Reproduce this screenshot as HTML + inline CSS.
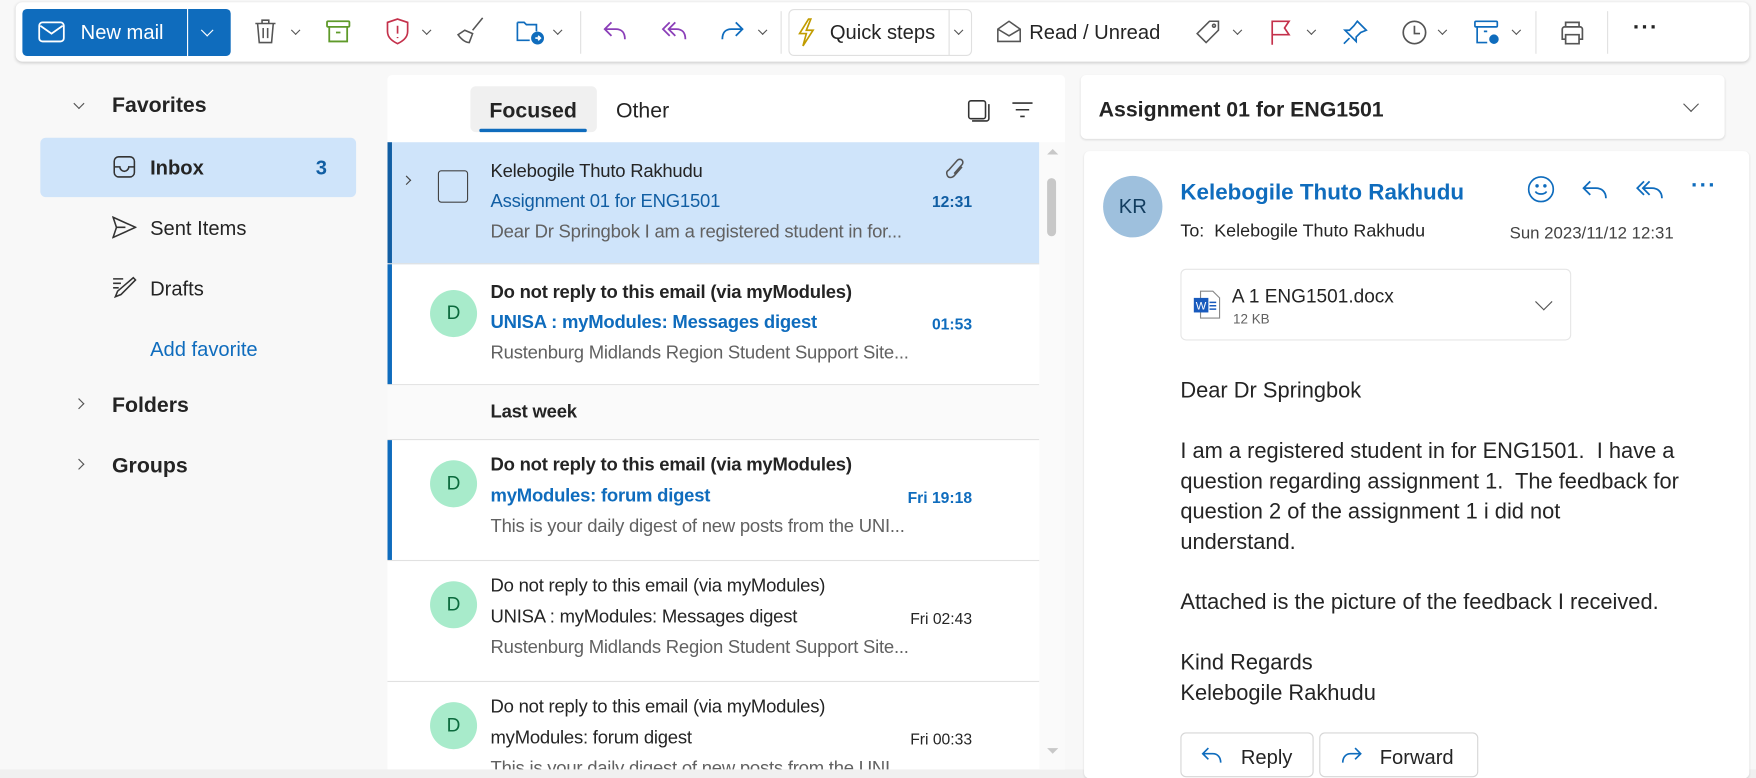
<!DOCTYPE html>
<html><head><meta charset="utf-8"><style>
*{box-sizing:border-box;margin:0;padding:0}
html,body{width:1756px;height:769px;overflow:hidden;background:#f0f0f0}
#w{position:absolute;left:0;top:0;width:1568px;height:687px;transform:scale(1.11990);transform-origin:0 0;font-family:"Liberation Sans",sans-serif;color:#242424;background:#f8f8f8}
.a{position:absolute}
.tb{left:14px;top:2px;width:1548px;height:53px;background:#fff;border-radius:6px;box-shadow:0 1px 3px rgba(0,0,0,.18)}
.chev{position:absolute;width:6px;height:6px;border-right:1.3px solid #555;border-bottom:1.3px solid #555;transform:rotate(45deg)}
.sep{position:absolute;top:10px;width:1px;height:38px;background:#e0e0e0}
.nav{font-size:18px}
.list{left:346px;top:67px;width:605px;height:620px;background:#fff;border-radius:4px 4px 0 0;overflow:hidden}
.row{position:absolute;left:0;width:582px;border-bottom:1px solid #e1e1e1}
.row .t{position:absolute;left:92px;font-size:16.5px;white-space:nowrap;letter-spacing:-.2px}
.av{position:absolute;left:38px;width:42px;height:42px;border-radius:50%;background:#a8ebcb;color:#0b6a3d;font-size:17px;text-align:center;line-height:42px}
.bar{position:absolute;left:0;top:0;width:4px;height:100%;background:#0f6cbd}
.time{position:absolute;right:60px;font-size:14px}
.blue{color:#0f6cbd}
.gray{color:#616161}
</style></head><body><div id="w">
<div class="a tb"></div>
<div class="a" style="left:20px;top:8px;width:186px;height:42px;background:#0f6cbd;border-radius:4px"></div>
<div class="a" style="left:167px;top:8px;width:1px;height:42px;background:#fff"></div>
<svg class="a" style="left:34px;top:19px" width="24" height="20" viewBox="0 0 24 20"><rect x="1" y="1" width="22" height="17" rx="3" fill="none" stroke="#fff" stroke-width="1.6"/><path d="M2 4l10 7 10-7" fill="none" stroke="#fff" stroke-width="1.6"/></svg>
<div class="a" style="left:72px;top:19px;color:#fff;font-size:18px">New mail</div>
<div class="chev" style="left:181px;top:23px;border-color:#fff;width:8px;height:8px"></div>
<svg class="a" style="left:226px;top:16px" width="22" height="24" viewBox="0 0 22 24" fill="none" stroke="#555" stroke-width="1.4"><path d="M2 5h18M8 5V2h6v3M4 5l1.5 17h11L18 5M9 9v9M13 9v9"/></svg>
<div class="chev" style="left:261px;top:24px"></div>
<svg class="a" style="left:291px;top:17px" width="22" height="22" viewBox="0 0 22 22" fill="none" stroke="#5f9a2a" stroke-width="1.6"><rect x="1" y="2" width="20" height="5" rx="1"/><path d="M3 7v13h16V7M9 12h4"/></svg>
<svg class="a" style="left:344px;top:16px" width="22" height="24" viewBox="0 0 22 24" fill="none" stroke="#c4314b" stroke-width="1.5"><path d="M11 1l9 3v8c0 6-5 9-9 11-4-2-9-5-9-11V4z"/><path d="M11 7v7M11 17v1"/></svg>
<div class="chev" style="left:378px;top:24px"></div>
<svg class="a" style="left:407px;top:15px" width="26" height="26" viewBox="0 0 26 26" fill="none" stroke="#555" stroke-width="1.4"><path d="M24 1l-9 11M8 12l7 3-3 8c-4 0-8-4-10-7l6-4z"/></svg>
<svg class="a" style="left:460px;top:16px" width="26" height="24" viewBox="0 0 26 24" fill="none" stroke="#0f6cbd" stroke-width="1.5"><path d="M2 4h6l2 2h9v6M2 4v16h11"/><circle cx="20" cy="18" r="5" fill="#0f6cbd"/><path d="M18 18h4M20.5 16l2 2-2 2" stroke="#fff"/></svg>
<div class="chev" style="left:495px;top:24px"></div>
<div class="sep" style="left:518px"></div>
<svg class="a" style="left:538px;top:18px" width="22" height="20" viewBox="0 0 22 20" fill="none" stroke="#8b3fb8" stroke-width="1.6"><path d="M8 2L2 8l6 6M2 8h10c5 0 8 3 8 9"/></svg>
<svg class="a" style="left:590px;top:18px" width="26" height="20" viewBox="0 0 26 20" fill="none" stroke="#8b3fb8" stroke-width="1.6"><path d="M8 2L2 8l6 6M13 2L7 8l6 6M7 8h7c5 0 8 3 8 9"/></svg>
<svg class="a" style="left:643px;top:18px" width="22" height="20" viewBox="0 0 22 20" fill="none" stroke="#0f6cbd" stroke-width="1.6"><path d="M14 2l6 6-6 6M20 8H10c-5 0-8 3-8 9"/></svg>
<div class="chev" style="left:678px;top:24px"></div>
<div class="sep" style="left:697px"></div>
<div class="a" style="left:704px;top:8px;width:164px;height:42px;border:1px solid #e0e0e0;border-radius:5px"></div>
<div class="a" style="left:847px;top:8px;width:1px;height:42px;background:#e0e0e0"></div>
<svg class="a" style="left:712px;top:16px" width="16" height="26" viewBox="0 0 16 26" fill="none" stroke="#c19c00" stroke-width="1.5"><path d="M10 1L2 14h6l-3 11 9-14H8l4-10z"/></svg>
<div class="a" style="left:741px;top:19px;font-size:18px">Quick steps</div>
<div class="chev" style="left:853px;top:24px"></div>
<svg class="a" style="left:889px;top:17px" width="24" height="22" viewBox="0 0 24 22" fill="none" stroke="#555" stroke-width="1.4"><path d="M2 9l10-7 10 7v11H2zM2 9l10 6 10-6"/></svg>
<div class="a" style="left:919px;top:19px;font-size:18px">Read / Unread</div>
<svg class="a" style="left:1067px;top:17px" width="24" height="24" viewBox="0 0 24 24" fill="none" stroke="#555" stroke-width="1.4"><path d="M13 2h8v8L10 21 2 13z"/><circle cx="17" cy="6" r="1.3"/></svg>
<div class="chev" style="left:1102px;top:24px"></div>
<svg class="a" style="left:1134px;top:17px" width="20" height="24" viewBox="0 0 20 24" fill="none" stroke="#c4314b" stroke-width="1.5"><path d="M2 23V2h15l-4 6 4 6H2"/></svg>
<div class="chev" style="left:1168px;top:24px"></div>
<svg class="a" style="left:1198px;top:17px" width="24" height="24" viewBox="0 0 24 24" fill="none" stroke="#0f6cbd" stroke-width="1.5"><path d="M14 2l8 8-5 2-4 4 0 4-10-10 4 0 4-4zM7 17l-5 5"/></svg>
<svg class="a" style="left:1251px;top:17px" width="24" height="24" viewBox="0 0 24 24" fill="none" stroke="#555" stroke-width="1.5"><circle cx="12" cy="12" r="10"/><path d="M12 6v7h5"/></svg>
<div class="chev" style="left:1285px;top:24px"></div>
<svg class="a" style="left:1315px;top:17px" width="26" height="24" viewBox="0 0 26 24" fill="none" stroke="#0f6cbd" stroke-width="1.5"><rect x="2" y="2" width="20" height="5" rx="1"/><path d="M4 7v14h9M10 11h3"/><circle cx="19" cy="18" r="3.5" fill="#0f6cbd"/></svg>
<div class="chev" style="left:1351px;top:24px"></div>
<div class="sep" style="left:1371px"></div>
<svg class="a" style="left:1392px;top:18px" width="24" height="22" viewBox="0 0 24 22" fill="none" stroke="#555" stroke-width="1.5"><path d="M6 6V2h12v4M6 17H3V8c0-1 1-2 2-2h14c1 0 2 1 2 2v9h-3M6 13h12v8H6z"/></svg>
<div class="sep" style="left:1435px"></div>
<div class="a" style="left:1458px;top:14px;font-size:20px;font-weight:bold;letter-spacing:1px">···</div>

<div class="chev" style="left:67px;top:89px;width:7px;height:7px"></div>
<div class="a nav" style="left:100px;top:84px;font-weight:bold;font-size:19px">Favorites</div>
<div class="a" style="left:36px;top:123px;width:282px;height:53px;background:#cfe4fa;border-radius:5px"></div>
<svg class="a" style="left:101px;top:139px" width="20" height="20" viewBox="0 0 20 20" fill="none" stroke="#333" stroke-width="1.4"><rect x="1" y="1" width="18" height="18" rx="4"/><path d="M1 10h5c0 2 2 4 4 4s4-2 4-4h5"/></svg>
<div class="a nav" style="left:134px;top:140px;font-weight:bold">Inbox</div>
<div class="a nav" style="left:282px;top:140px;font-weight:bold;color:#115ea3">3</div>
<svg class="a" style="left:100px;top:193px" width="22" height="20" viewBox="0 0 22 20" fill="none" stroke="#333" stroke-width="1.4"><path d="M1 1l20 9-20 9 3-9zM4 10h8"/></svg>
<div class="a nav" style="left:134px;top:194px">Sent Items</div>
<svg class="a" style="left:100px;top:246px" width="22" height="22" viewBox="0 0 22 22" fill="none" stroke="#333" stroke-width="1.4"><path d="M1 3h9M1 7h7M1 11h5M19 2l2 2-13 13-5 2 2-5z"/></svg>
<div class="a nav" style="left:134px;top:248px">Drafts</div>
<div class="a nav blue" style="left:134px;top:302px">Add favorite</div>
<div class="chev" style="left:67px;top:357px;transform:rotate(-45deg);width:7px;height:7px"></div>
<div class="a nav" style="left:100px;top:352px;font-weight:bold;font-size:19px">Folders</div>
<div class="chev" style="left:67px;top:411px;transform:rotate(-45deg);width:7px;height:7px"></div>
<div class="a nav" style="left:100px;top:406px;font-weight:bold;font-size:19px">Groups</div>

<div class="a list">
 <div class="a" style="left:74px;top:10px;width:113px;height:41px;background:#f0f0f0;border-radius:5px"></div>
 <div class="a" style="left:82px;top:48px;width:96px;height:3px;background:#0f6cbd;border-radius:2px"></div>
 <div class="a" style="left:91px;top:22px;font-size:19px;font-weight:bold">Focused</div>
 <div class="a" style="left:204px;top:22px;font-size:19px">Other</div>
 <svg class="a" style="left:517px;top:21px" width="22" height="22" viewBox="0 0 22 22" fill="none" stroke="#333" stroke-width="1.4"><rect x="2" y="2" width="15" height="16" rx="2"/><path d="M5 20h13c1 0 2-1 2-2V5"/></svg>
 <svg class="a" style="left:557px;top:22px" width="20" height="18" viewBox="0 0 20 18" fill="none" stroke="#333" stroke-width="1.4"><path d="M1 3h18M4 9h12M8 15h4"/></svg>

 <div class="row" style="top:60px;height:109px;background:#cfe4fa">
  <div class="bar" style="background:#115ea3"></div>
  <div class="chev" style="left:14px;top:31px;transform:rotate(-45deg);border-color:#444"></div>
  <div class="a" style="left:45px;top:25px;width:27px;height:29px;border:1.3px solid #444;border-radius:3px"></div>
  <div class="t" style="top:17px">Kelebogile Thuto Rakhudu</div>
  <div class="t blue" style="top:44px;color:#115ea3">Assignment 01 for ENG1501</div>
  <div class="t gray" style="top:71px">Dear Dr Springbok I am a registered student in for...</div>
  <svg class="a" style="left:497px;top:13px" width="20" height="22" viewBox="0 0 20 22" fill="none" stroke="#555" stroke-width="1.4"><path d="M16 9l-7 8c-2 2-5 2-6 0s-1-4 1-5l8-9c1-1 3-1 4 0s1 3 0 4l-7 8"/></svg>
  <div class="time" style="top:45px;color:#115ea3;font-weight:bold">12:31</div>
 </div>
 <div class="row" style="top:169px;height:108px">
  <div class="bar"></div>
  <div class="av" style="top:23px">D</div>
  <div class="t" style="top:16px;font-weight:bold">Do not reply to this email (via myModules)</div>
  <div class="t blue" style="top:43px;font-weight:bold">UNISA : myModules: Messages digest</div>
  <div class="t gray" style="top:70px">Rustenburg Midlands Region Student Support Site...</div>
  <div class="time blue" style="top:45px;font-weight:bold">01:53</div>
 </div>
 <div class="row" style="top:277px;height:49px;background:#fafafa">
  <div class="t" style="top:15px;font-weight:bold">Last week</div>
 </div>
 <div class="row" style="top:326px;height:108px">
  <div class="bar"></div>
  <div class="av" style="top:18px">D</div>
  <div class="t" style="top:13px;font-weight:bold">Do not reply to this email (via myModules)</div>
  <div class="t blue" style="top:41px;font-weight:bold">myModules: forum digest</div>
  <div class="t gray" style="top:68px">This is your daily digest of new posts from the UNI...</div>
  <div class="time blue" style="top:43px;font-weight:bold">Fri 19:18</div>
 </div>
 <div class="row" style="top:434px;height:108px">
  <div class="av" style="top:18px">D</div>
  <div class="t" style="top:13px">Do not reply to this email (via myModules)</div>
  <div class="t" style="top:41px">UNISA : myModules: Messages digest</div>
  <div class="t gray" style="top:68px">Rustenburg Midlands Region Student Support Site...</div>
  <div class="time" style="top:43px">Fri 02:43</div>
 </div>
 <div class="row" style="top:542px;height:108px;border:0">
  <div class="av" style="top:18px">D</div>
  <div class="t" style="top:13px">Do not reply to this email (via myModules)</div>
  <div class="t" style="top:41px">myModules: forum digest</div>
  <div class="t gray" style="top:68px">This is your daily digest of new posts from the UNI...</div>
  <div class="time" style="top:43px">Fri 00:33</div>
 </div>
 <div class="a" style="left:582px;top:60px;width:23px;height:560px;background:#fafafa"></div>
 <div class="a" style="left:589px;top:92px;width:8px;height:52px;background:#c8c8c8;border-radius:4px"></div>
 <div class="a" style="left:589px;top:66px;width:0;height:0;border:5px solid transparent;border-bottom-color:#c8c8c8;border-top:0"></div>
 <div class="a" style="left:589px;top:601px;width:0;height:0;border:5px solid transparent;border-top-color:#c8c8c8;border-bottom:0"></div>
</div>

<div class="a" style="left:965px;top:67px;width:575px;height:57px;background:#fff;border-radius:5px;box-shadow:0 1px 2px rgba(0,0,0,.12)"></div>
<div class="a" style="left:981px;top:88px;font-size:19px;font-weight:bold">Assignment 01 for ENG1501</div>
<div class="chev" style="left:1505px;top:88px;width:10px;height:10px"></div>
<div class="a" style="left:968px;top:135px;width:594px;height:560px;background:#fff;border-radius:5px;box-shadow:0 1px 2px rgba(0,0,0,.12)"></div>
<div class="a" style="left:985px;top:157px;width:53px;height:55px;border-radius:50%;background:#9ec0dd;color:#123c5e;font-size:18px;text-align:center;line-height:55px">KR</div>
<div class="a" style="left:1054px;top:161px;font-size:20px;font-weight:bold;color:#0f6cbd">Kelebogile Thuto Rakhudu</div>
<div class="a" style="left:1054px;top:198px;font-size:16px">To:&nbsp; Kelebogile Thuto Rakhudu</div>
<div class="a" style="left:1348px;top:200px;font-size:15px;color:#424242">Sun 2023/11/12 12:31</div>
<svg class="a" style="left:1364px;top:157px" width="24" height="24" viewBox="0 0 24 24" fill="none" stroke="#0f6cbd" stroke-width="1.5"><circle cx="12" cy="12" r="11"/><circle cx="8.5" cy="9" r=".8" fill="#0f6cbd"/><circle cx="15.5" cy="9" r=".8" fill="#0f6cbd"/><path d="M7 14c2 3 8 3 10 0"/></svg>
<svg class="a" style="left:1412px;top:160px" width="24" height="18" viewBox="0 0 24 18" fill="none" stroke="#0f6cbd" stroke-width="1.6"><path d="M8 2L2 8l6 6M2 8h11c5 0 9 3 9 9"/></svg>
<svg class="a" style="left:1460px;top:160px" width="26" height="18" viewBox="0 0 26 18" fill="none" stroke="#0f6cbd" stroke-width="1.6"><path d="M8 2L2 8l6 6M13 2L7 8l6 6M7 8h8c5 0 9 3 9 9"/></svg>
<div class="a" style="left:1510px;top:155px;font-size:20px;font-weight:bold;color:#0f6cbd;letter-spacing:1px">···</div>
<div class="a" style="left:1054px;top:240px;width:349px;height:64px;border:1px solid #e6e6e6;border-radius:5px"></div>
<svg class="a" style="left:1065px;top:258px" width="26" height="28" viewBox="0 0 26 28"><path d="M7 2h11l6 6v18H7z" fill="#fff" stroke="#888"/><path d="M15 12h6M15 15h6M15 18h6" stroke="#185abd" stroke-width="1.3"/><rect x="1" y="8" width="13" height="13" fill="#185abd"/><text x="7.5" y="18.5" font-size="10" fill="#fff" text-anchor="middle" font-family="Liberation Sans">W</text></svg>
<div class="a" style="left:1100px;top:255px;font-size:17px">A 1 ENG1501.docx</div>
<div class="a" style="left:1101px;top:278px;font-size:12px;color:#616161">12 KB</div>
<div class="chev" style="left:1373px;top:264px;width:11px;height:11px;border-color:#555"></div>
<div class="a" style="left:1054px;top:336px;font-size:19.5px;line-height:27px;width:500px;white-space:nowrap">Dear Dr Springbok<br><br>I am a registered student in for ENG1501.&nbsp; I have a<br>question regarding assignment 1.&nbsp; The feedback for<br>question 2 of the assignment 1 i did not<br>understand.<br><br>Attached is the picture of the feedback I received.<br><br>Kind Regards<br>Kelebogile Rakhudu</div>
<div class="a" style="left:1054px;top:654px;width:119px;height:40px;border:1px solid #d6d6d6;border-radius:5px"></div>
<div class="a" style="left:1178px;top:654px;width:142px;height:40px;border:1px solid #d6d6d6;border-radius:5px"></div>
<svg class="a" style="left:1072px;top:666px" width="20" height="16" viewBox="0 0 20 16" fill="none" stroke="#0f6cbd" stroke-width="1.5"><path d="M7 2L2 7l5 5M2 7h9c4 0 7 3 7 8"/></svg>
<div class="a" style="left:1108px;top:666px;font-size:18px">Reply</div>
<svg class="a" style="left:1197px;top:666px" width="20" height="16" viewBox="0 0 20 16" fill="none" stroke="#0f6cbd" stroke-width="1.5"><path d="M13 2l5 5-5 5M18 7H9c-4 0-7 3-7 8"/></svg>
<div class="a" style="left:1232px;top:666px;font-size:18px">Forward</div>
</div></body></html>
